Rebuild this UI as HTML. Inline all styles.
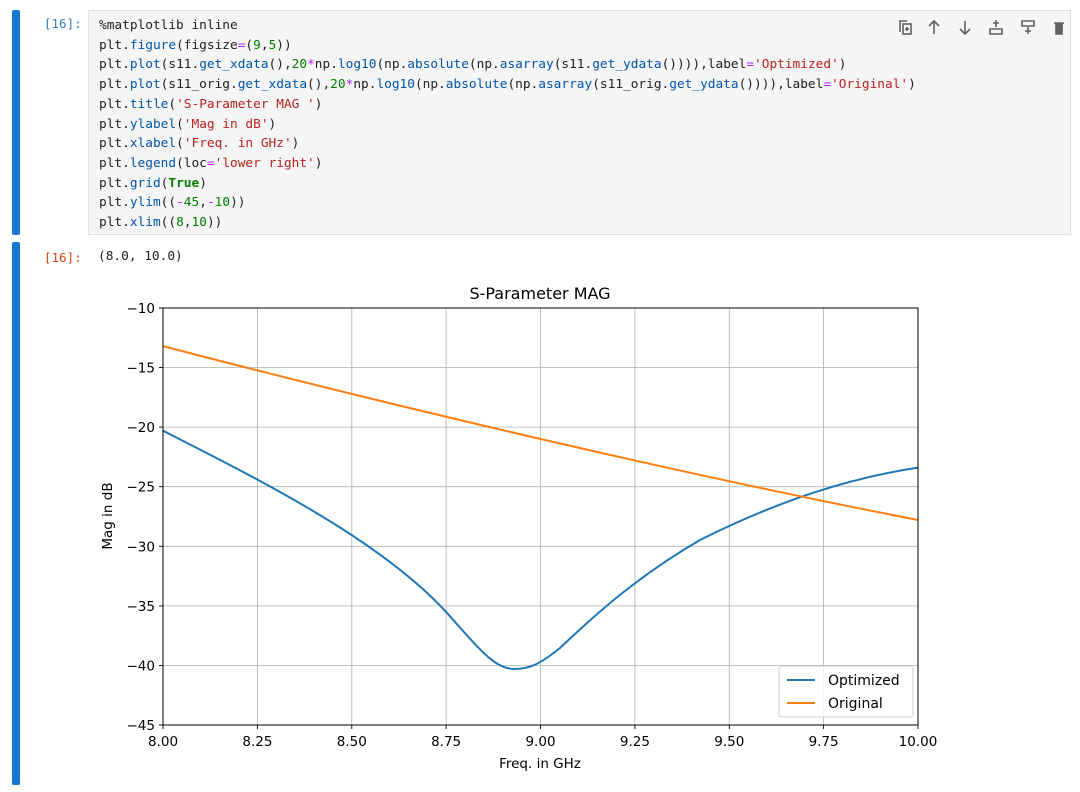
<!DOCTYPE html>
<html><head><meta charset="utf-8"><style>
body{margin:0;width:1080px;height:792px;background:#fff;position:relative;overflow:hidden;font-family:"Liberation Sans",sans-serif}
.bar{position:absolute;left:12px;width:8px;background:#1976d2;border-radius:2px}
.prompt{position:absolute;left:44px;font-family:"DejaVu Sans Mono","Liberation Mono",monospace;font-size:12.5px}
.code{position:absolute;left:88px;top:10px;width:983px;height:225px;background:#f5f5f5;border:1px solid #e0e0e0;box-sizing:border-box}
pre{margin:0;position:absolute;left:10px;top:5px;font-family:"DejaVu Sans Mono","Liberation Mono",monospace;font-size:12.8px;line-height:19.7px;color:#212121}
.f{color:#0055aa}.s{color:#ba2121}.n{color:#008000}.o{color:#aa22ff}.k{color:#008000;font-weight:bold}
</style></head><body>
<div class="bar" style="top:10px;height:225px"></div>
<div class="bar" style="top:242px;height:543px"></div>
<div class="prompt" style="top:16px;color:#307fc1">[16]:</div>
<div class="prompt" style="top:250px;color:#d84315">[16]:</div>
<div class="code"><pre>%matplotlib inline
plt.<span class="f">figure</span>(figsize<span class="o">=</span>(<span class="n">9</span>,<span class="n">5</span>))
plt.<span class="f">plot</span>(s11.<span class="f">get_xdata</span>(),<span class="n">20</span><span class="o">*</span>np.<span class="f">log10</span>(np.<span class="f">absolute</span>(np.<span class="f">asarray</span>(s11.<span class="f">get_ydata</span>()))),label<span class="o">=</span><span class="s">'Optimized'</span>)
plt.<span class="f">plot</span>(s11_orig.<span class="f">get_xdata</span>(),<span class="n">20</span><span class="o">*</span>np.<span class="f">log10</span>(np.<span class="f">absolute</span>(np.<span class="f">asarray</span>(s11_orig.<span class="f">get_ydata</span>()))),label<span class="o">=</span><span class="s">'Original'</span>)
plt.<span class="f">title</span>(<span class="s">'S-Parameter MAG '</span>)
plt.<span class="f">ylabel</span>(<span class="s">'Mag in dB'</span>)
plt.<span class="f">xlabel</span>(<span class="s">'Freq. in GHz'</span>)
plt.<span class="f">legend</span>(loc<span class="o">=</span><span class="s">'lower right'</span>)
plt.<span class="f">grid</span>(<span class="k">True</span>)
plt.<span class="f">ylim</span>((<span class="o">-</span><span class="n">45</span>,<span class="o">-</span><span class="n">10</span>))
plt.<span class="f">xlim</span>((<span class="n">8</span>,<span class="n">10</span>))</pre>
<svg style="position:absolute;left:805px;top:6px" width="175" height="22" viewBox="0 0 175 22" fill="none" stroke="#616161" stroke-width="1.6">
<path d="M6 15V4h7"/><rect x="9" y="7" width="8" height="10" fill="#f5f5f5"/><path d="M13 10v4M11 12h4"/>
<path d="M40 17V4M35 9l5-5 5 5"/>
<path d="M71 4v13M66 12l5 5 5-5"/>
<path d="M96 12h12v5H96zM102 3v7M99 6h6"/>
<path d="M128 4h12v5h-12zM134 10v7M131 14h6"/>
<path d="M160 6h10M162 7h6v10h-6z" fill="#616161"/>
</svg>
</div>
<div style="position:absolute;left:98px;top:249px;font-family:'DejaVu Sans Mono','Liberation Mono',monospace;font-size:12.8px;color:#212121">(8.0, 10.0)</div>
<svg style="position:absolute;left:0;top:0" width="1080" height="792" font-family="DejaVu Sans,Liberation Sans,sans-serif">
<g stroke="#b0b0b0" stroke-width="0.8">
<path d="M257.4 308V725M351.8 308V725M446.1 308V725M540.5 308V725M634.9 308V725M729.3 308V725M823.6 308V725"/>
<path d="M163 367.6H918M163 427.1H918M163 486.7H918M163 546.3H918M163 605.9H918M163 665.4H918"/>
</g>
<g stroke="#000" stroke-width="0.9">
<path d="M163 725v4M257.4 725v4M351.8 725v4M446.1 725v4M540.5 725v4M634.9 725v4M729.3 725v4M823.6 725v4M918 725v4"/>
<path d="M163 308h-4M163 367.6h-4M163 427.1h-4M163 486.7h-4M163 546.3h-4M163 605.9h-4M163 665.4h-4M163 725h-4"/>
</g>
<path fill="none" stroke="#1f77b4" stroke-width="2" d="M163 430.7 C260 480 380 540 446 611.8 C480 650 495 669 514 669 C530 669 540 664 560 648 C600 610 640 575 700 540 C780 500 850 478 918 467.6"/>
<path fill="none" stroke="#ff7f0e" stroke-width="2" d="M163 346.1 C350 395 650 468 918 520"/>
<rect x="163" y="308" width="755" height="417" fill="none" stroke="#000" stroke-width="1"/>
<g font-size="13.5" text-anchor="middle" fill="#000">
<text x="163" y="746">8.00</text><text x="257.4" y="746">8.25</text><text x="351.8" y="746">8.50</text><text x="446.1" y="746">8.75</text><text x="540.5" y="746">9.00</text><text x="634.9" y="746">9.25</text><text x="729.3" y="746">9.50</text><text x="823.6" y="746">9.75</text><text x="918" y="746">10.00</text>
</g>
<g font-size="13.5" text-anchor="end" fill="#000">
<text x="155" y="313">−10</text><text x="155" y="372.6">−15</text><text x="155" y="432.1">−20</text><text x="155" y="491.7">−25</text><text x="155" y="551.3">−30</text><text x="155" y="610.9">−35</text><text x="155" y="670.4">−40</text><text x="155" y="730">−45</text>
</g>
<text x="540" y="299" font-size="16" text-anchor="middle">S-Parameter MAG</text>
<text x="540" y="768" font-size="13.5" text-anchor="middle">Freq. in GHz</text>
<text transform="translate(112 516) rotate(-90)" font-size="13.5" text-anchor="middle">Mag in dB</text>
<rect x="779" y="666" width="134" height="51" rx="3" fill="#fff" fill-opacity="0.8" stroke="#ccc"/>
<path d="M787 680h28" stroke="#1f77b4" stroke-width="2"/><path d="M787 703h28" stroke="#ff7f0e" stroke-width="2"/>
<text x="828" y="685" font-size="14">Optimized</text><text x="828" y="708" font-size="14">Original</text>
</svg>
</body></html>
